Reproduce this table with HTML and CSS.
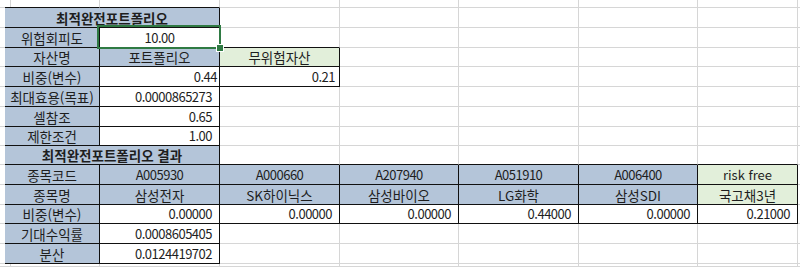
FILE: index.html
```html
<!DOCTYPE html>
<html lang="ko">
<head>
<meta charset="utf-8">
<title>최적완전포트폴리오</title>
<link rel="stylesheet" href="styles.css">
</head>
<body>
<div class="sheet">
  <!-- r0 -->
  <div class="c"></div><div class="c kb"></div><div class="c kb"></div><div class="c"></div><div class="c"></div><div class="c"></div><div class="c"></div><div class="c"></div><div class="c last"></div>
  <!-- r1 -->
  <div class="c kr"></div><div class="c m h b ce kr kb">최적완전포트폴리오</div><div class="c"></div><div class="c"></div><div class="c"></div><div class="c"></div><div class="c"></div><div class="c last"></div>
  <!-- r2 -->
  <div class="c kr"></div><div class="c h ce kr kb">위험회피도</div><div class="c n ce kr kb sel">10.00<span class="handle"></span></div><div class="c kb"></div><div class="c"></div><div class="c"></div><div class="c"></div><div class="c"></div><div class="c last"></div>
  <!-- r3 -->
  <div class="c kr"></div><div class="c h ce kr kb">자산명</div><div class="c h ce kr kb">포트폴리오</div><div class="c g ce kr kb">무위험자산</div><div class="c"></div><div class="c"></div><div class="c"></div><div class="c"></div><div class="c last"></div>
  <!-- r4 -->
  <div class="c kr"></div><div class="c h ce kr kb">비중(변수)</div><div class="c n ri kr kb p2">0.44</div><div class="c n ri kr kb p4">0.21</div><div class="c"></div><div class="c"></div><div class="c"></div><div class="c"></div><div class="c last"></div>
  <!-- r5 -->
  <div class="c kr"></div><div class="c h ce kr kb">최대효용(목표)</div><div class="c n ri kr kb">0.0000865273</div><div class="c"></div><div class="c"></div><div class="c"></div><div class="c"></div><div class="c"></div><div class="c last"></div>
  <!-- r6 -->
  <div class="c kr"></div><div class="c h ce kr kb">셀참조</div><div class="c n ri kr kb">0.65</div><div class="c"></div><div class="c"></div><div class="c"></div><div class="c"></div><div class="c"></div><div class="c last"></div>
  <!-- r7 -->
  <div class="c kr"></div><div class="c h ce kr kb">제한조건</div><div class="c n ri kr kb">1.00</div><div class="c"></div><div class="c"></div><div class="c"></div><div class="c"></div><div class="c"></div><div class="c last"></div>
  <!-- r8 -->
  <div class="c kr"></div><div class="c m h b ce kr kb">최적완전포트폴리오 결과</div><div class="c kb"></div><div class="c kb"></div><div class="c kb"></div><div class="c kb"></div><div class="c kb"></div><div class="c last"></div>
  <!-- r9 -->
  <div class="c kr"></div><div class="c h ce kr kb">종목코드</div><div class="c n h ce kr kb">A005930</div><div class="c n h ce kr kb">A000660</div><div class="c n h ce kr kb">A207940</div><div class="c n h ce kr kb">A051910</div><div class="c n h ce kr kb">A006400</div><div class="c lat g ce kr kb">risk free</div><div class="c last"></div>
  <!-- r10 -->
  <div class="c kr"></div><div class="c h ce kr kb">종목명</div><div class="c h ce kr kb">삼성전자</div><div class="c h ce kr kb">SK하이닉스</div><div class="c h ce kr kb">삼성바이오</div><div class="c h ce kr kb">LG화학</div><div class="c h ce kr kb">삼성SDI</div><div class="c g ce kr kb">국고채3년</div><div class="c last"></div>
  <!-- r11 -->
  <div class="c kr"></div><div class="c h ce kr kb">비중(변수)</div><div class="c n ri kr kb">0.00000</div><div class="c n ri kr kb">0.00000</div><div class="c n ri kr kb">0.00000</div><div class="c n ri kr kb">0.44000</div><div class="c n ri kr kb">0.00000</div><div class="c n ri kr kb">0.21000</div><div class="c last"></div>
  <!-- r12 -->
  <div class="c kr"></div><div class="c h ce kr kb">기대수익률</div><div class="c n ri kr kb">0.0008605405</div><div class="c"></div><div class="c"></div><div class="c"></div><div class="c"></div><div class="c"></div><div class="c last"></div>
  <!-- r13 -->
  <div class="c kr"></div><div class="c h ce kr kb">분산</div><div class="c n ri kr kb">0.0124419702</div><div class="c"></div><div class="c"></div><div class="c"></div><div class="c"></div><div class="c"></div><div class="c last"></div>
  <!-- r14 -->
  <div class="c"></div><div class="c"></div><div class="c"></div><div class="c"></div><div class="c"></div><div class="c"></div><div class="c"></div><div class="c"></div><div class="c last"></div>
</div>
</body>
</html>
```

FILE: styles.css
```css
html, body {
  margin: 0;
  padding: 0;
  background: #ffffff;
}

.sheet {
  width: 800px;
  height: 267px;
  overflow: hidden;
  display: grid;
  grid-template-columns: 5px 95px 120px 120px 119px 120px 119px 100px 1fr;
  grid-template-rows: 8px 20px 20px 19px 20px 20px 20px 19px 19px 20px 20px 19px 20px 20px 1fr;
  font-family: "Noto Sans CJK KR", "Noto Sans", sans-serif;
  font-size: 13.5px;
  color: #1e1e1e;
}

.c {
  box-sizing: border-box;
  border-right: 1px solid #d6d6d6;
  border-bottom: 1px solid #d6d6d6;
  display: flex;
  align-items: center;
  white-space: nowrap;
  overflow: visible;
  line-height: 18px;
  padding: 0 7px 0 3px;
  min-width: 0;
}

.last {
  border-right: none;
}

.kr { border-right-color: #111111; }
.kb { border-bottom-color: #111111; }

.m { grid-column: span 2; }

.h { background: #b4c5d9; }
.g { background: #e2efda; }
.b { font-weight: 700; }

.n {
  font-size: 13px;
  letter-spacing: -0.5px;
}

.lat {
  font-size: 13px;
}

.ce { justify-content: center; padding: 0 2px; }
.ri { justify-content: flex-end; }
.p2 { padding-right: 2px; }
.p4 { padding-right: 4px; }

.sel {
  position: relative;
}

.sel::after {
  content: "";
  position: absolute;
  top: -3px;
  left: -3px;
  right: -2px;
  bottom: -2px;
  border: 2px solid #2f7a43;
  z-index: 2;
  pointer-events: none;
}

.handle {
  position: absolute;
  right: -5px;
  bottom: -5px;
  width: 6px;
  height: 6px;
  background: #2f7a43;
  border: 1px solid #ffffff;
  z-index: 3;
}
```
